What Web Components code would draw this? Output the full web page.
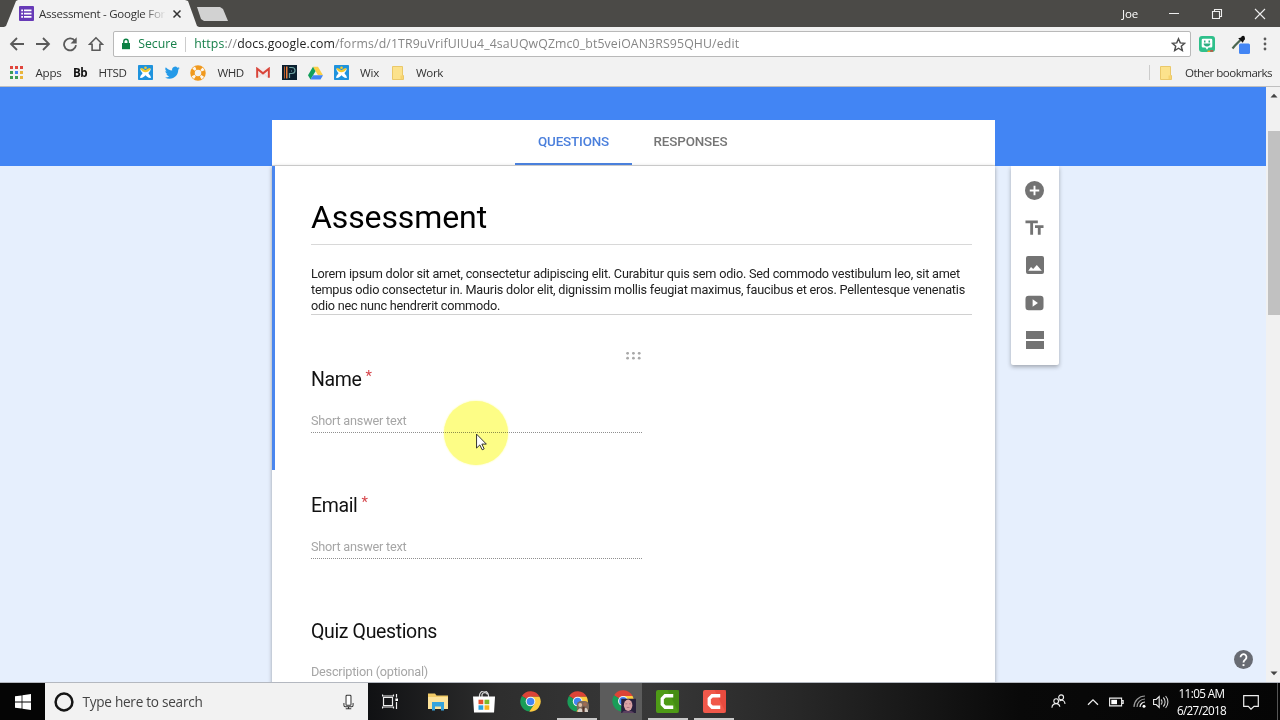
<!DOCTYPE html>
<html lang="en">
<head>
<meta charset="utf-8">
<title>Assessment - Google Forms</title>
<style>
  html, body { margin: 0; height: 100%; overflow: hidden; }
  body { font-family: Roboto, sans-serif; background: #e6effd; }
</style>
</head>
<body>
<desktop-screen></desktop-screen>
<script>
const chromeLogo = `
  <path d="M12 12 2.2 5.6A11.6 11.6 0 0 1 22.4 6.6L12 6.6z" fill="#dc4437"/>
  <path d="M12 12 2.2 5.6A11.6 11.6 0 0 0 10.6 23.5L16.7 14.7z" fill="#199d58"/>
  <path d="M12 6.6H22.3A11.6 11.6 0 0 1 10.6 23.5L16.7 14.7z" fill="#fecd40"/>
  <circle cx="12" cy="12" r="5.5" fill="#f4f4f4"/><circle cx="12" cy="12" r="4.3" fill="#4285f4"/>`;

const camtasia = (a, b) => `
  <rect width="24" height="24" rx="2" fill="${a}"/><path d="M12 0h12v24z" fill="${b}" opacity=".6"/>
  <path d="M18 6H9.5L6.5 9v6l3 3H18" fill="none" stroke="#fff" stroke-width="3.4"/>`;

// name: [viewBox, markup]
const icons = {
  forms: ['0 0 15 15', '<rect width="15" height="15" rx="1" fill="#673ab7"/><g fill="#fff"><path d="M5 3.5h7.5v1.8H5zM5 6.7h7.5v1.8H5zM5 9.9h7.5v1.8H5z"/><path d="M2.2 3.5H4v1.8H2.2zM2.2 6.7H4v1.8H2.2zM2.2 9.9H4v1.8H2.2z"/></g>'],
  close: ['0 0 10 10', '<path d="M1.5 1.5l7 7M8.5 1.5l-7 7" stroke="#333" stroke-width="1.5"/>'],
  back: ['0 0 16 16', '<path d="M15 8H2M8 2 2 8l6 6" fill="none" stroke="#5a5a5a" stroke-width="1.8"/>'],
  forward: ['0 0 16 16', '<path d="M1 8h13M8 2l6 6-6 6" fill="none" stroke="#5a5a5a" stroke-width="1.8"/>'],
  reload: ['0 0 16 16', '<path d="M13 5A6 6 0 1 0 14 9.2" fill="none" stroke="#5a5a5a" stroke-width="1.8"/><path d="M14.7 1.2v6.2H8.5z" fill="#5a5a5a"/>'],
  home: ['0 0 16 16', '<path d="M8 1.8 1.6 8.2h2.5v6h7.8v-6h2.5z" fill="none" stroke="#5a5a5a" stroke-width="1.6"/>'],
  lock: ['0 0 10 12', '<path d="M1 5h8v6.2H1z" fill="#0b8043"/><path d="M2.8 5V3.4a2.2 2.2 0 0 1 4.4 0V5" fill="none" stroke="#0b8043" stroke-width="1.4"/>'],
  star: ['0 0 24 24', '<path d="M12 2.8l2.8 6.6 7.1.6-5.4 4.7 1.6 7L12 18l-6.1 3.7 1.6-7L2.1 10l7.1-.6z" fill="none" stroke="#4c4c4c" stroke-width="2.3"/>'],
  bitmoji: ['0 0 16 16', '<rect width="16" height="16" rx="3" fill="#2fc08b"/><path d="M4 2.7h8a1.3 1.3 0 0 1 1.3 1.3v6.2a1.3 1.3 0 0 1-1.3 1.3H9.5L8 13.7l-1.5-2.2H4a1.3 1.3 0 0 1-1.3-1.3V4A1.3 1.3 0 0 1 4 2.7z" fill="#fff"/><path d="M5 4.6h1.5v2H5zM9.5 4.6H11v2H9.5zM4.6 7.6h6.8a3.4 2.8 0 0 1-6.8 0z" fill="#2fae82"/><path d="M8.5 14.6h2.7v1.4H8.5z" fill="#f5a623"/><path d="M11.2 14.2h3v1.5h-3z" fill="#d9453a"/>'],
  dropper: ['0 0 20 20', '<path d="M9.5 6 3.8 11.7 1.5 14.5" fill="none" stroke="#4b6650" stroke-width="2.2"/><path d="M7.2 4.2l4.6 4.5 1.1-2.3c2-1 .8-1.8.8-3.6-1.2-2-3-1.2-3.6.6z" fill="#111"/><rect x="8" y="9.5" width="11" height="10.5" rx="1.5" fill="#4285f4"/>'],
  more: ['0 0 4 14', '<g fill="#5a5a5a"><circle cx="2" cy="2" r="1.4"/><circle cx="2" cy="7" r="1.4"/><circle cx="2" cy="12" r="1.4"/></g>'],
  apps: ['0 0 13 13', '<path d="M0 0h3v3H0zM5 0h3v3H5zM10 0h3v3h-3z" fill="#e0453c"/><path d="M0 5h3v3H0zM0 10h3v3H0zM5 10h3v3H5z" fill="#3d9b57"/><path d="M5 5h3v3H5z" fill="#4285f4"/><path d="M10 5h3v3h-3zM10 10h3v3h-3z" fill="#e9b53c"/>'],
  wix: ['0 0 15 15', '<rect width="15" height="15" rx=".8" fill="#1f93dd"/><path d="M2.3 3.8C5 3.8 6 4.8 7.5 6 9 4.8 10 3.8 12.7 3.8c-.3 2.6-1.6 3.5-2.3 4.3.5 1.5 2.3 2 2.5 4.9C10 13.2 9 11.5 7.5 10.3 6 11.5 5 13.2 2.1 13c.2-2.9 2-3.4 2.5-4.9C3.9 7.3 2.6 6.4 2.3 3.8z" fill="#fff"/><path d="M2.4 3C5 3 6 4.3 7.5 5.2 9 4.3 10 3 12.6 3 12 6 9.5 7.3 7.5 7.3S3 6 2.4 3z" fill="#f5cb2e"/><circle cx="7.5" cy="2.8" r="1.3" fill="#f5cb2e"/>'],
  twitter: ['0 0 24 24', '<path d="M23.6 4.9c-.9.4-1.8.7-2.8.8 1-.6 1.8-1.6 2.2-2.7-1 .6-2 1-3.1 1.2a4.9 4.9 0 0 0-8.4 4.5C7.4 8.5 3.7 6.5 1.3 3.5a4.9 4.9 0 0 0 1.5 6.6c-.8 0-1.6-.2-2.2-.6 0 2.4 1.7 4.4 3.9 4.9-.7.2-1.5.2-2.2.1.6 2 2.4 3.4 4.6 3.4A9.9 9.9 0 0 1 0 19.9 14 14 0 0 0 7.2 22c9.1 0 14.3-7.7 14-14.6.9-.7 1.7-1.5 2.4-2.5z" fill="#259ae8"/>'],
  buoy: ['0 0 16 16', '<circle cx="8" cy="8" r="5.5" fill="none" stroke="#f0991e" stroke-width="4.5"/><circle cx="8" cy="8" r="5.5" fill="none" stroke="#fdf6ec" stroke-width="3.2" stroke-dasharray="2.6 6.04" stroke-dashoffset="-3"/>'],
  gmail: ['0 0 24 18', '<path d="M2 1h20v16H2z" fill="#f2ecec"/><path d="M4 17l6-6M20 17l-6-6" stroke="#d3cfcf"/><path d="M2 18V2.5L12 10.5 22 2.5V18" fill="none" stroke="#d9453a" stroke-width="3.4"/>'],
  power: ['0 0 15 15', '<rect width="15" height="15" fill="#0b2030"/><path d="M2.2 1.5h.8v12h-.8z" fill="#e06a2c"/><path d="M4 1.5h1.5v12H4z" fill="#ec7d3b"/><path d="M7.5 13V8.5h2.5a3 3 0 0 0 0-6H7.2M9 6h1" fill="none" stroke="#6ca0a0" stroke-width="1.2"/>'],
  drive: ['0 0 24 22', '<path d="M8 1h8l8 13.5h-8z" fill="#fccf47"/><path d="M8 1l4 7L4 21.5 0 14.5z" fill="#12a05c"/><path d="M8.1 14.5H24l-4 7H4z" fill="#4285f4"/>'],
  folder: ['0 0 12 14', '<path d="M.5.5h10v9h1v4H.5z" fill="#fce28c" stroke="#e8c460" stroke-width=".9"/><path d="M8.5 9.5h2.3v3.5H8.5z" fill="#f7d26c"/>'],
  minimize: ['0 0 12 12', '<path d="M1 5.5h10" stroke="#eee"/>'],
  restore: ['0 0 12 12', '<path d="M1.5 3.5h7v7h-7zM3.5 3.5v-2h7v7h-2" fill="none" stroke="#eee" stroke-width="1.1"/>'],
  exit: ['0 0 12 12', '<path d="M1 1l10 10M11 1 1 11" stroke="#eee" stroke-width="1.1"/>'],
  add: ['2 2 20 20', '<path d="M12 2a10 10 0 1 0 0 20 10 10 0 0 0 0-20zm5 11h-4v4h-2v-4H7v-2h4V7h2v4h4z" fill="#737373"/>'],
  title: ['2 4 20 15', '<path d="M2.5 4v3h5v12h3V7h5V4h-13zm19 5h-9v3h3v7h3v-7h3V9z" fill="#737373"/>'],
  image: ['3 3 18 18', '<path d="M21 19V5a2 2 0 0 0-2-2H5a2 2 0 0 0-2 2v14a2 2 0 0 0 2 2h14a2 2 0 0 0 2-2zM5.3 17.7l2.7-3.6 2.2 2 3.6-4.2 5 5.8z" fill="#737373"/>'],
  video: ['0 0 20 16', '<rect x=".5" y=".3" width="19" height="15.4" rx="3.4" fill="#737373"/><path d="M8 4v8L13.6 8z" fill="#fff"/>'],
  section: ['0 0 18 18', '<path d="M0 0h18v8H0zM0 10h18v8H0z" fill="#737373"/>'],
  help: ['2 2 20 20', '<circle cx="12" cy="12" r="10" fill="#686b73"/><path d="M8.9 9.6a3.1 3.1 0 1 1 5.2 2.2C12.8 13 12 13.3 12 15.2" fill="none" stroke="#fff" stroke-width="1.9"/><path d="M11 16.9h2v2h-2z" fill="#fff"/>'],
  drag: ['0 0 15 8', '<g fill="#a9a9a9"><circle cx="1.6" cy="1.3" r="1.4"/><circle cx="7.4" cy="1.3" r="1.4"/><circle cx="13.2" cy="1.3" r="1.4"/><circle cx="1.6" cy="6.2" r="1.4"/><circle cx="7.4" cy="6.2" r="1.4"/><circle cx="13.2" cy="6.2" r="1.4"/></g>'],
  pointer: ['0 0 12 19', '<path d="M.6.9v15.2L4.2 12.7l2.6 5.3 2.1-1-2.5-5.2h4.9z" fill="#fff" stroke="#222" stroke-width="1"/>'],
  windows: ['0 0 16 16', '<path d="M0 2.3 6.6 1.4V7.6H0zM7.4 1.3 16 0V7.6H7.4zM0 8.4H6.6V14.6L0 13.7zM7.4 8.4H16V16L7.4 14.7z" fill="#fff"/>'],
  cortana: ['0 0 20 20', '<circle cx="10" cy="10" r="8.4" fill="none" stroke="#151515" stroke-width="2.5"/>'],
  mic: ['0 0 12 16', '<rect x="3.3" y=".6" width="5.4" height="11" rx="1" fill="#fff" stroke="#333" stroke-width="1.1"/><path d="M1 9v2.5c0 1 .6 1.7 1.6 1.7h6.8c1 0 1.6-.7 1.6-1.7V9M6 13.2V15M3 15.4h6" fill="none" stroke="#333" stroke-width="1.1"/>'],
  taskview: ['0 0 17 15', '<path d="M1.5 3.5h9v8h-9z M.5.5v1.5h11V.5M.5 14.5V13h11v1.5M14.5 0v3.5M14.5 8v7" fill="none" stroke="#eee" stroke-width="1.2"/><path d="M13.4 4.5h2.6v2.5h-2.6z" fill="#fff"/>'],
  explorer: ['0 0 20 18', '<path d="M0 .5h7l1.5 2H20V16H0z" fill="#f2cb66"/><path d="M0 4h20v12H0z" fill="#fde39a"/><path d="M4 9h12v8.5h-3v-4H7v4H4z" fill="#35a4dc"/>'],
  store: ['0 0 22 22', '<path d="M6.5 6V4.5a3.5 3.5 0 0 1 9 0V6M9 6V3.5a3 3 0 0 1 5.5 0" fill="none" stroke="#ddd" stroke-width="1.2"/><path d="M0 5.5h22L21 21.5H1z" fill="#fff"/><path d="M5.5 8.7h4.8v4.5H5.5z" fill="#e8502e"/><path d="M11.5 8.7h4.8v4.5h-4.8z" fill="#7db928"/><path d="M5.5 14.3h4.8v4.5H5.5z" fill="#28a3e0"/><path d="M11.5 14.3h4.8v4.5h-4.8z" fill="#f7b51d"/>'],
  chrome: ['0 0 24 24', chromeLogo],
  chromeFamily: ['0 0 26 24', chromeLogo + '<rect x="11" y="11.5" width="14" height="12.5" rx="5" fill="#7d6a5c"/><circle cx="15" cy="16" r="2.2" fill="#e2bfa6"/><circle cx="20.5" cy="15" r="2.2" fill="#a06c52"/><path d="M12 24c0-5 5-6 6-1 2-6 6-4 6 1z" fill="#d8cfc6"/><path d="M17.5 18h2.5v6h-2.5z" fill="#54352a"/>'],
  chromePortrait: ['0 0 26 25', chromeLogo + '<rect x="10" y="9.5" width="16" height="15.5" fill="#28203c"/><ellipse cx="17.5" cy="16.5" rx="4.6" ry="6.2" fill="#dba3a4"/><path d="M11 25c1-3 4-2.5 6.5-2 3-.5 5 0 6.5 2z" fill="#5a4060"/><path d="M14.5 15h2M18.5 15h2M16 19h3" stroke="#9e6876" stroke-width=".8"/>'],
  camtasia: ['0 0 24 24', camtasia('#4e9b16', '#3f8412')],
  recorder: ['0 0 24 24', camtasia('#f1584a', '#e24338')],
  people: ['0 0 16 16', '<g fill="none" stroke="#eee" stroke-width="1.2"><circle cx="10.8" cy="3.5" r="2.6"/><circle cx="5.5" cy="7.6" r="2.5"/><path d="M1 14.6c.2-3 2-4.4 4.5-4.4 2.4 0 3.6 1.4 3.9 3.4M9 7.5c3.2-2.2 5.7 0 6 3"/></g>'],
  chevron: ['0 0 12 8', '<path d="M1 6.8 6 1.8l5 5" fill="none" stroke="#eee" stroke-width="1.3"/>'],
  battery: ['0 0 15 10', '<path d="M.6 1.1h12v7.8H.6zM12.8 3.5h1.4v3h-1.4z" fill="none" stroke="#eee" stroke-width="1.1"/><path d="M2.3 2.8H8v4.4H2.3z" fill="#fff"/>'],
  wifi: ['0 0 13 13', '<g fill="none" stroke="#999" stroke-width="1.2"><path d="M1 12A11 11 0 0 1 12 1M4 12a8 8 0 0 1 8-8"/><path d="M7 12a5 5 0 0 1 5-5" stroke="#eee"/></g><circle cx="11" cy="11.3" r="1.5" fill="#fff"/>'],
  volume: ['0 0 16 14', '<path d="M.6 4.5h2.6l3-3v11l-3-3H.6z" fill="none" stroke="#eee" stroke-width="1.1"/><path d="M8 4.5a3.5 3.5 0 0 1 0 5M10.3 2.5a6.5 6.5 0 0 1 0 9M12.6 1a9 9 0 0 1 0 12" fill="none" stroke="#ccc" stroke-width="1.1"/>'],
  notice: ['0 0 16 16', '<path d="M.7 1.7h14.6v10.6h-4.3L8 15.2l-2.7-2.9H.7z" fill="none" stroke="#eee" stroke-width="1.2"/>'],
  up: ['0 0 8 5', '<path d="M.5 4.5 4 .8l3.5 3.7z" fill="#444"/>'],
  down: ['0 0 8 5', '<path d="M.5.5 4 4.2 7.5.5z" fill="#444"/>']
};

class UiIcon extends HTMLElement {
  constructor() {
    super();
    this.attachShadow({ mode: 'open' });
  }
  connectedCallback() {
    const [box, markup] = icons[this.getAttribute('name')];
    const w = this.getAttribute('w');
    const h = this.getAttribute('h') || w;
    this.shadowRoot.innerHTML = `
      <style>
        :host { display: block; flex: none; width: ${w}px; height: ${h}px; }
        svg { display: block; }
      </style>
      <svg width="${w}" height="${h}" viewBox="${box}">${markup}</svg>
    `;
  }
}
customElements.define('ui-icon', UiIcon);

// One line of text, tracked so that it fills the width given
class FitText extends HTMLElement {
  constructor() {
    super();
    this.attachShadow({ mode: 'open' });
    this.shadowRoot.innerHTML = `
      <style>
        :host { display: block; flex: none; white-space: nowrap; }
        span { display: inline-block; white-space: pre; }
      </style>
      <span><slot></slot></span>
    `;
  }
  connectedCallback() {
    const width = parseFloat(this.getAttribute('w'));
    const span = this.shadowRoot.querySelector('span');
    const natural = span.getBoundingClientRect().width;
    this.style.width = width + 'px';
    if (natural) {
      span.style.letterSpacing = (width - natural) / this.textContent.length + 'px';
    }
  }
}
customElements.define('fit-text', FitText);

function define(name, css, html) {
  customElements.define(name, class extends HTMLElement {
    constructor() {
      super();
      this.attachShadow({ mode: 'open' });
      this.shadowRoot.innerHTML = `<style>${css}</style>${html}`;
    }
  });
}

define('title-bar', `
  :host { display: flex; height: 27px; background: #4b4a47; font: 11.5px/27px "Open Sans", sans-serif; }
  .tab {
    display: flex;
    align-items: center;
    width: 195px;
    box-sizing: border-box;
    padding-left: 15px;
    margin-left: 4px;
    background: #f2f2f2;
    clip-path: polygon(0 100%, 2px 96%, 12px 4%, 14px 0, 181px 0, 184px 4%, 193px 96%, 195px 100%);
  }
  .name { width: 127px; margin: 0 6px 0 5px; color: #333; -webkit-mask-image: linear-gradient(90deg, #000 82%, transparent); mask-image: linear-gradient(90deg, #000 82%, transparent); }
  .new { width: 31px; height: 14px; margin: 7px auto 0 -2px; background: #d2d2d2; clip-path: polygon(0 0, 23px 0, 26px 2px, 31px 14px, 7px 14px, 4px 12px); }
  .window { display: flex; align-items: center; color: #fff; }
  .window fit-text { margin-right: 30px; }
  ui-icon + ui-icon { margin-left: 31px; }
`, `
  <div class="tab">
    <ui-icon name="forms" w="15"></ui-icon>
    <div class="name"><fit-text w="126">Assessment - Google For</fit-text></div>
    <ui-icon name="close" w="10"></ui-icon>
  </div>
  <div class="new"></div>
  <div class="window">
    <fit-text w="16">Joe</fit-text>
    <ui-icon name="minimize" w="12"></ui-icon>
    <ui-icon name="restore" w="12"></ui-icon>
    <ui-icon name="exit" w="12"></ui-icon>
    <span style="width: 14px"></span>
  </div>
`);

define('address-bar', `
  :host { display: flex; align-items: center; height: 34px; box-sizing: border-box; padding: 0 13px 0 9px; background: #f2f2f2; font: 12.3px/24px "Open Sans", sans-serif; }
  .nav { display: flex; gap: 10.4px; margin-right: 9px; }
  .omnibox { display: flex; align-items: center; flex: 1; height: 24px; padding: 0 4px 0 7px; background: #fff; border: 1px solid #b9b9b9; border-radius: 2px; }
  .secure { color: #17804a; margin-left: 7px; }
  .rule { width: 1px; height: 15px; margin: 0 8px; background: #ccc; }
  .url { color: #868686; }
  .url b { color: #17804a; font-weight: 400; }
  .url i { color: #222; font-style: normal; }
  .star { margin-left: auto; }
`, `
  <div class="nav">
    <ui-icon name="back" w="16"></ui-icon>
    <ui-icon name="forward" w="16"></ui-icon>
    <ui-icon name="reload" w="16"></ui-icon>
    <ui-icon name="home" w="16"></ui-icon>
  </div>
  <div class="omnibox">
    <ui-icon name="lock" w="10" h="12"></ui-icon>
    <fit-text class="secure" w="39">Secure</fit-text>
    <span class="rule"></span>
    <fit-text class="url" w="545"><b>https</b>://<i>docs.google.com</i>/forms/d/1TR9uVrifUIUu4_4saUQwQZmc0_bt5veiOAN3RS95QHU/edit</fit-text>
    <ui-icon class="star" name="star" w="15"></ui-icon>
  </div>
  <ui-icon name="bitmoji" w="16" style="margin-left: 8px"></ui-icon>
  <ui-icon name="dropper" w="20" style="margin: 0 12px 0 16px"></ui-icon>
  <ui-icon name="more" w="4" h="14"></ui-icon>
`);

define('bookmarks-bar', `
  :host { display: flex; align-items: center; height: 26px; box-sizing: border-box; padding: 0 8px 2px 10px; background: #f2f2f2; border-bottom: 1px solid #bfbfbf; color: #333; font: 11.6px/23px "Open Sans", sans-serif; }
  .list { display: flex; align-items: center; gap: 11.5px; flex: 1; }
  .rule { width: 1px; height: 15px; background: #ccc; margin-right: 10px; }
`, `
  <div class="list">
    <ui-icon name="apps" w="13"></ui-icon>
    <fit-text w="26" style="margin-left: 1px">Apps</fit-text>
    <fit-text w="14" style="font-weight: 700; color: #111">Bb</fit-text>
    <fit-text w="28">HTSD</fit-text>
    <ui-icon name="wix" w="15"></ui-icon>
    <ui-icon name="twitter" w="15"></ui-icon>
    <ui-icon name="buoy" w="16" style="margin-left: -1px"></ui-icon>
    <fit-text w="26">WHD</fit-text>
    <ui-icon name="gmail" w="14" h="11" style="margin-left: 1px"></ui-icon>
    <ui-icon name="power" w="15"></ui-icon>
    <ui-icon name="drive" w="15" h="14"></ui-icon>
    <ui-icon name="wix" w="15" style="margin-left: -1px"></ui-icon>
    <fit-text w="19">Wix</fit-text>
    <ui-icon name="folder" w="12" h="14" style="margin-left: 1px"></ui-icon>
    <fit-text w="27" style="margin-left: 1px">Work</fit-text>
  </div>
  <span class="rule"></span>
  <ui-icon name="folder" w="12" h="14"></ui-icon>
  <fit-text w="87" style="margin-left: 13px">Other bookmarks</fit-text>
`);

define('form-tabs', `
  :host { display: flex; padding-left: 243px; height: 45px; background: #fff; border-bottom: 1px solid #dcdcdc; font: 500 13.4px/43px Roboto, sans-serif; }
  div { display: flex; justify-content: center; width: 117px; height: 42.5px; color: #757575; border-bottom: 2.5px solid transparent; }
  .active { color: #4a7fdc; border-color: #4a80dc; }
`, `
  <div class="active"><fit-text w="71">QUESTIONS</fit-text></div>
  <div><fit-text w="74">RESPONSES</fit-text></div>
`);

define('form-header', `
  :host { display: block; padding: 24px 23px 0 36px; font-family: Roboto, sans-serif; }
  h1 { margin: 0 0 21px; height: 54px; font: 400 32px/54px Roboto, sans-serif; color: #000; border-bottom: 1px solid #d8d8d8; }
  .text { font-size: 12.7px; line-height: 16px; color: #222; border-bottom: 1px solid #d0d0d0; }
`, `
  <h1><fit-text w="176">Assessment</fit-text></h1>
  <div class="text">
    <fit-text w="649">Lorem ipsum dolor sit amet, consectetur adipiscing elit. Curabitur quis sem odio. Sed commodo vestibulum leo, sit amet</fit-text>
    <fit-text w="654">tempus odio consectetur in. Mauris dolor elit, dignissim mollis feugiat maximus, faucibus et eros. Pellentesque venenatis</fit-text>
    <fit-text w="189">odio nec nunc hendrerit commodo.</fit-text>
  </div>
`);

define('form-question', `
  :host { display: block; width: 331px; height: 126px; font-family: Roboto, sans-serif; }
  .label { display: flex; gap: 4px; height: 24px; font-size: 19.5px; line-height: 26px; color: #111; }
  .star { font-size: 15px; line-height: 18px; color: #d6454b; }
  .answer { height: 21px; margin-top: 20px; font-size: 12.7px; line-height: 19px; color: #a6a6a6; border-bottom: 1px dotted #8f8f8f; }
`, `
  <div class="label"><slot></slot><span class="star">*</span></div>
  <div class="answer"><fit-text w="95.5">Short answer text</fit-text></div>
`);

define('form-card', `
  :host { display: block; width: 723px; margin-top: 33px; }
  .body { height: 530px; background: #fff; box-shadow: 0 1px 4px rgba(0, 0, 0, .35); }
  .selected { height: 304px; border-left: 3px solid #4a86ee; }
  .handle { margin: 37px 0 0 351px; }
  .questions { padding-left: 39px; margin-top: -103px; }
  .quiz { height: 24px; font: 19.5px/26px Roboto, sans-serif; color: #111; }
  .hint { margin-top: 19px; font: 12.7px/19px Roboto, sans-serif; color: #a6a6a6; }
`, `
  <form-tabs></form-tabs>
  <div class="body">
    <div class="selected">
      <form-header></form-header>
      <ui-icon class="handle" name="drag" w="15" h="8"></ui-icon>
    </div>
    <div class="questions">
      <form-question><fit-text w="50.5">Name</fit-text></form-question>
      <form-question><fit-text w="46.5">Email</fit-text></form-question>
      <div class="quiz"><fit-text w="126">Quiz Questions</fit-text></div>
      <div class="hint"><fit-text w="117">Description (optional)</fit-text></div>
    </div>
  </div>
`);

define('tool-strip', `
  :host { display: flex; flex-direction: column; align-items: center; justify-content: space-between; width: 48.5px; height: 198.5px; box-sizing: border-box; padding: 14.5px 0 15px 0; margin: 79px 0 0 15.5px; background: #fff; border-radius: 0 0 2px 2px; box-shadow: 0 2px 4px rgba(0, 0, 0, .3); clip-path: inset(0 -8px -8px -8px); }
  div { display: flex; align-items: center; height: 19px; }
`, `
  <div><ui-icon name="add" w="19"></ui-icon></div>
  <div><ui-icon name="title" w="19" h="15"></ui-icon></div>
  <div><ui-icon name="image" w="18"></ui-icon></div>
  <div><ui-icon name="video" w="19" h="16"></ui-icon></div>
  <div><ui-icon name="section" w="18"></ui-icon></div>
`);

define('scroll-bar', `
  :host { display: flex; flex-direction: column; align-items: center; width: 14px; box-sizing: border-box; padding: 6px 0; background: #f1f1f1; }
  .thumb { align-self: flex-end; width: 12px; height: 184px; margin: 33px 0 auto; background: #c1c1c1; }
`, `
  <ui-icon name="up" w="8" h="5" style="margin-left: 1px"></ui-icon>
  <div class="thumb"></div>
  <ui-icon name="down" w="8" h="5" style="margin-left: 1px"></ui-icon>
`);

define('click-pointer', `
  :host { position: absolute; left: 444px; top: 401px; width: 64px; height: 64px; border-radius: 50%; background: #fdfd86; box-shadow: 0 0 2px #fdfd86; mix-blend-mode: multiply; }
`, '');

define('mouse-arrow', `
  :host { position: absolute; left: 476px; top: 433px; }
`, '<ui-icon name="pointer" w="11" h="18"></ui-icon>');

define('task-button', `
  :host { display: flex; align-items: center; justify-content: center; width: 40px; height: 37px; box-sizing: border-box; margin-right: 6.2px; border-bottom: 0 solid #c8c8c8; }
  :host([open]) { border-bottom-width: 2px; padding: 1px 0 0; }
  :host([active]) { background: #5c5c5c; border-bottom-color: #5c5c5c; }
`, '<slot></slot>');

define('task-bar', `
  :host { display: flex; height: 37px; background: linear-gradient(90deg, #101113 368px, #2e2e2e 500px, #383838 650px, #272727 800px, #090909 1020px, #050505); font: 14px/37px "Open Sans", sans-serif; }
  .start { display: flex; align-items: center; justify-content: center; width: 45px; background: #050505; }
  .search { display: flex; align-items: center; width: 323px; box-sizing: border-box; padding: 0 14px 0 9px; background: #f2f2f2; color: #444; font-size: 13.6px; }
  .search fit-text { margin: 0 auto 0 8.5px; }
  .apps { display: flex; padding-left: 2px; }
  .tray { display: flex; align-items: center; margin-left: auto; color: #fff; }
  .clock { display: flex; flex-direction: column; align-items: center; width: 50px; margin: 0 16px 0 7.5px; font-size: 11.7px; line-height: 16.5px; }
  .edge { width: 1px; height: 37px; margin: 0 2px 0 18.5px; background: #555; }
`, `
  <div class="start"><ui-icon name="windows" w="16"></ui-icon></div>
  <div class="search">
    <ui-icon name="cortana" w="20"></ui-icon>
    <fit-text w="120">Type here to search</fit-text>
    <ui-icon name="mic" w="11" h="16"></ui-icon>
  </div>
  <div class="apps">
    <task-button><ui-icon name="taskview" w="17" h="15"></ui-icon></task-button>
    <task-button style="margin-left: 2px"><ui-icon name="explorer" w="20" h="18"></ui-icon></task-button>
    <task-button><ui-icon name="store" w="22"></ui-icon></task-button>
    <task-button><ui-icon name="chrome" w="21"></ui-icon></task-button>
    <task-button open><ui-icon name="chromeFamily" w="23" h="21" style="margin-left: 3px"></ui-icon></task-button>
    <task-button open active style="margin: 0 6px 0 -3px; width: 42px"><ui-icon name="chromePortrait" w="24" h="23" style="margin-left: 7px"></ui-icon></task-button>
    <task-button open><ui-icon name="camtasia" w="23"></ui-icon></task-button>
    <task-button open><ui-icon name="recorder" w="23"></ui-icon></task-button>
  </div>
  <div class="tray">
    <ui-icon name="people" w="15"></ui-icon>
    <ui-icon name="chevron" w="12" h="8" style="margin-left: 21px"></ui-icon>
    <ui-icon name="battery" w="15" h="10" style="margin-left: 10px"></ui-icon>
    <ui-icon name="wifi" w="13" style="margin-left: 9px"></ui-icon>
    <ui-icon name="volume" w="16" h="14" style="margin-left: 7px"></ui-icon>
    <div class="clock">
      <fit-text w="46">11:05 AM</fit-text>
      <fit-text w="49">6/27/2018</fit-text>
    </div>
    <ui-icon name="notice" w="16"></ui-icon>
    <span class="edge"></span>
  </div>
`);

define('desktop-screen', `
  :host { display: flex; flex-direction: column; position: relative; width: 1280px; height: 720px; overflow: hidden; background: #f2f2f2; }
  .view { display: flex; flex: 1; min-height: 0; box-sizing: border-box; overflow: hidden; border-bottom: 1px solid #b4b8c0; }
  .page { display: flex; align-items: flex-start; width: 1266px; box-sizing: border-box; padding-left: 272px; background: linear-gradient(#4285f4 79px, #e6effd 79px); }
  .help { position: absolute; left: 1233.5px; top: 650px; }
`, `
  <title-bar></title-bar>
  <address-bar></address-bar>
  <bookmarks-bar></bookmarks-bar>
  <div class="view">
    <div class="page">
      <form-card></form-card>
      <tool-strip></tool-strip>
    </div>
    <scroll-bar></scroll-bar>
  </div>
  <task-bar></task-bar>
  <ui-icon class="help" name="help" w="19"></ui-icon>
  <click-pointer></click-pointer>
  <mouse-arrow></mouse-arrow>
`);
</script>
</body>
</html>
